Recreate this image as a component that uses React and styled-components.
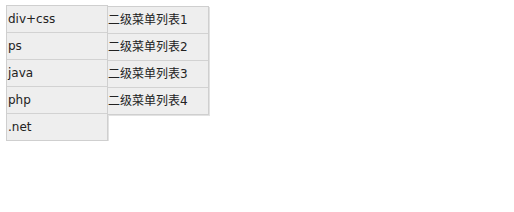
import React from "react";
import styled, { createGlobalStyle } from "styled-components";

const GlobalStyle = createGlobalStyle`
  html, body {
    margin: 0;
    padding: 0;
    background: #fff;
  }
  body {
    font-family: "DejaVu Sans", Verdana, "Noto Sans CJK SC", sans-serif;
    font-size: 12px;
    color: #222;
  }
`;

const menuItems = [
  { label: "div+css", sub: ["二级菜单列表1", "二级菜单列表2", "二级菜单列表3", "二级菜单列表4"] },
  { label: "ps" },
  { label: "java" },
  { label: "php" },
  { label: ".net" },
];

const Page = styled.div`
  padding: 5px 0 0 6px;
`;

const Menu = styled.ul`
  list-style: none;
  margin: 0;
  padding: 0;
  width: 100px;
  border: 1px solid #cfcfcf;
  box-shadow: 1px 1px 0 #e2e2e2;
`;

const Item = styled.li`
  position: relative;
  height: 26px;
  line-height: 26px;
  padding-left: 1px;
  background: #eeeeee;
  border-bottom: 1px solid #d2d2d2;

  &:last-child {
    border-bottom: none;
  }
`;

// flyout sits over the page next to the first item
const SubMenu = styled.ul`
  position: absolute;
  left: 100px;
  top: 0;
  list-style: none;
  margin: 0;
  padding: 0;
  width: 100px;
  border: 1px solid #cfcfcf;
  box-shadow: 1px 1px 0 #e2e2e2;
  z-index: 2;
`;

const SubItem = styled.li`
  height: 26px;
  line-height: 26px;
  padding-left: 0;
  background: #eeeeee;
  border-bottom: 1px solid #d2d2d2;
  white-space: nowrap;
  font-family: "DejaVu Sans", "Noto Sans CJK SC", sans-serif;

  &:last-child {
    border-bottom: none;
  }
`;

export default function App() {
  return (
    <Page>
      <GlobalStyle />
      <Menu>
        {menuItems.map((item) => (
          <Item key={item.label}>
            {item.label}
            {item.sub && (
              <SubMenu>
                {item.sub.map((s) => (
                  <SubItem key={s}>{s}</SubItem>
                ))}
              </SubMenu>
            )}
          </Item>
        ))}
      </Menu>
    </Page>
  );
}
